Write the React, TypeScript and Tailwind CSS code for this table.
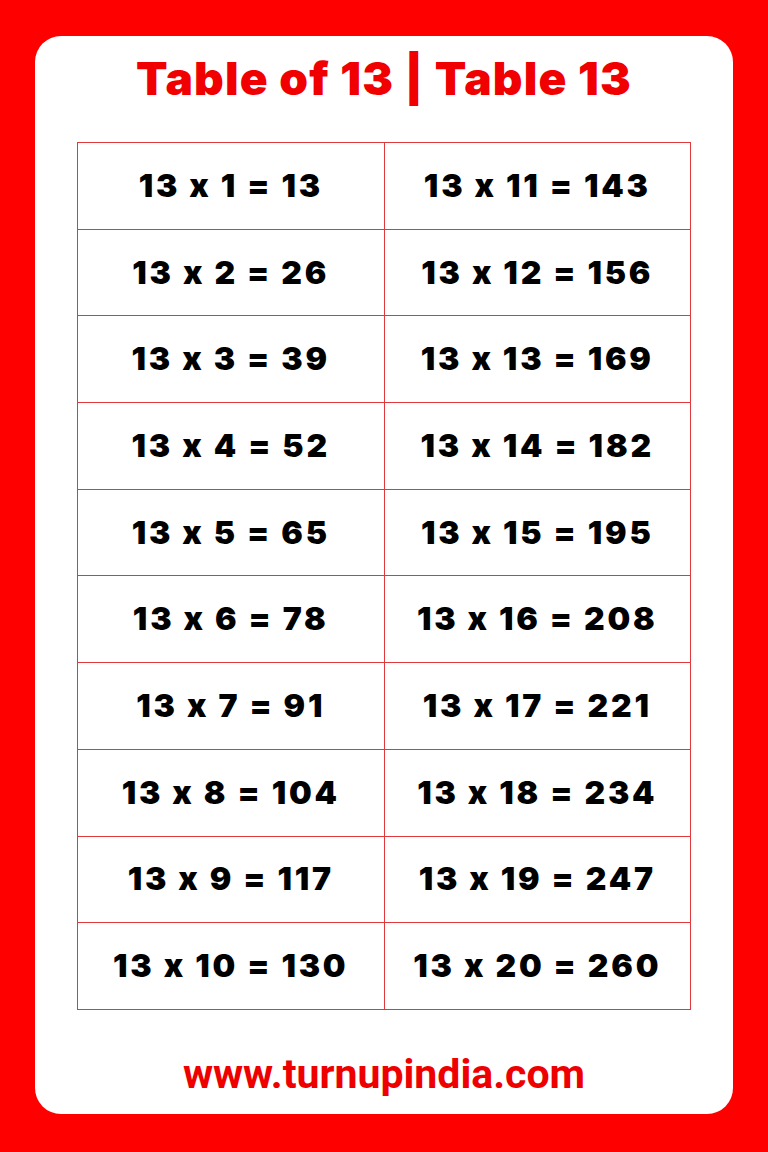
const rows = Array.from({ length: 10 }, (_, i) => i + 1);

const Cell = ({ n }: { n: number }) => (
  <div className="h-[86.7px] flex items-center justify-center border-r border-b border-[#e0393b]">
    <span className="font-['Inter',sans-serif] font-black text-[32px] tracking-[2.8px] text-black">
      13 x {n} = {13 * n}
    </span>
  </div>
);

export default function App() {
  return (
    <div className="w-[768px] h-[1152px] bg-[#ff0000] pt-[36px] px-[35px]">
      <div className="h-[1078px] bg-white rounded-[26px] flex flex-col px-[42px] pt-[16px]">
        {/* Title */}
        <h1 className="h-[52px] leading-[52px] text-center font-['Inter',sans-serif] font-black text-[46px] tracking-[1.2px] text-[#f00000]">
          Table of 13 | Table 13
        </h1>

        {/* Multiplication grid */}
        <div className="mt-[38px] grid grid-cols-2 border-l border-t border-[#e0393b]">
          {rows.map((n) => (
            <div key={n} className="contents">
              <Cell n={n} />
              <Cell n={n + 10} />
            </div>
          ))}
        </div>

        {/* Footer */}
        <p className="mt-[40px] text-center font-['Roboto',sans-serif] font-bold text-[41px] leading-[48px] text-[#ee0000]">
          www.turnupindia.com
        </p>
      </div>
    </div>
  );
}
